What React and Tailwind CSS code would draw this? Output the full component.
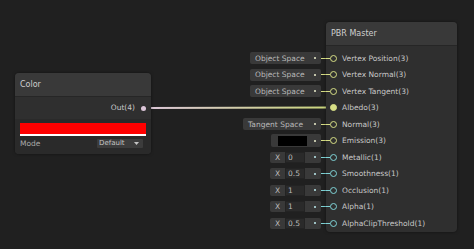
import React from 'react'

const V3 = '#d7de86'
const V1 = '#7fd3d6'
const V4 = '#dcc6d9'

const pbrRows = [
  { label: 'Vertex Position(3)', color: V3, field: { kind: 'space', text: 'Object Space', w: 'w-[71px]' } },
  { label: 'Vertex Normal(3)', color: V3, field: { kind: 'space', text: 'Object Space', w: 'w-[71px]' } },
  { label: 'Vertex Tangent(3)', color: V3, field: { kind: 'space', text: 'Object Space', w: 'w-[71px]' } },
  { label: 'Albedo(3)', color: V3, connected: true },
  { label: 'Normal(3)', color: V3, field: { kind: 'space', text: 'Tangent Space', w: 'w-[78px]' } },
  { label: 'Emission(3)', color: V3, field: { kind: 'color' } },
  { label: 'Metallic(1)', color: V1, field: { kind: 'x', value: '0' } },
  { label: 'Smoothness(1)', color: V1, field: { kind: 'x', value: '0.5' } },
  { label: 'Occlusion(1)', color: V1, field: { kind: 'x', value: '1' } },
  { label: 'Alpha(1)', color: V1, field: { kind: 'x', value: '1' } },
  { label: 'AlphaClipThreshold(1)', color: V1, field: { kind: 'x', value: '0.5' } },
]

const Dot = ({ color }) => (
  <div className="w-[2px] h-[2px] rounded-full shrink-0" style={{ backgroundColor: color }} />
)

const Dash = ({ color, w }) => (
  <div className={`${w} h-0 border-t border-dashed shrink-0`} style={{ borderColor: color }} />
)

const InlineField = ({ field, color }) => {
  const dotColor = color === V1 ? '#bfeef0' : '#eef0cf'

  if (field.kind === 'space') {
    return (
      <div className={`${field.w} h-[12px] bg-[#393939] rounded-[2px] flex items-center justify-between pl-[5px] pr-[5px] text-[#b9b9b9]`}>
        <span>{field.text}</span>
        <Dot color={dotColor} />
      </div>
    )
  }

  if (field.kind === 'color') {
    return (
      <div className="w-[50px] h-[13px] bg-[#393939] rounded-[2px] flex items-center justify-between pl-[7px] pr-[5px]">
        <div className="w-[29px] h-[10px] bg-black" />
        <Dot color={dotColor} />
      </div>
    )
  }

  // vector1 field: "X" label + value box
  return (
    <div className="w-[51px] h-[11px] bg-[#393939] rounded-[2px] flex items-center text-[#b9b9b9]">
      <span className="w-[15px] text-center">X</span>
      <div className="w-[20px] h-[11px] bg-[#2a2a2a] border border-[#232323] flex items-center pl-[2px] leading-none">
        {field.value}
      </div>
      <div className="flex-1 flex justify-end pr-[5px]">
        <Dot color={dotColor} />
      </div>
    </div>
  )
}

const Port = ({ color, connected }) => (
  <div
    className="w-[7px] h-[7px] rounded-full border-[1.5px] shrink-0"
    style={{ borderColor: color, backgroundColor: connected ? color : '#2f2f2f' }}
  />
)

const ColorNode = () => (
  <div className="absolute left-[15px] top-[73px] w-[136px] rounded-[4px] overflow-hidden bg-[#2f2f2f] shadow-[0_0_3px_rgba(0,0,0,0.5)]">
    <div className="h-[24px] bg-[#393939] border-b border-[#262626] flex items-center pl-[5px] text-[8px] text-[#cfcfcf]">
      Color
    </div>
    <div className="h-[22px] flex items-center justify-end pr-[5px] text-[#c8c8c8]">
      <span>Out(4)</span>
      <div className="ml-[6px] w-[5px] h-[5px] rounded-full" style={{ backgroundColor: V4 }} />
    </div>
    <div className="bg-[#2a2a2a] pt-[4px] pb-[3px]">
      <div className="mx-[5px] h-[11px] bg-[#ff0000]" />
      <div className="mx-[5px] h-[2px] bg-white" />
      <div className="h-[15px] flex items-center justify-between pl-[5px] pr-[8px]">
        <span className="text-[#a9a9a9]">Mode</span>
        <div className="w-[46px] h-[9px] bg-[#3c3c3c] rounded-[1px] flex items-center justify-between pl-[2px] pr-[4px] text-[7px] text-[#c4c4c4] leading-none">
          <span>Default</span>
          <svg width="5" height="3" viewBox="0 0 5 3">
            <path d="M0 0 L5 0 L2.5 3 Z" fill="#c4c4c4" />
          </svg>
        </div>
      </div>
    </div>
  </div>
)

const PbrMaster = () => (
  <div className="absolute left-[243px] top-[22px] flex">
    {/* inline fields that sit left of the node */}
    <div className="w-[83px] pt-[28px] flex flex-col">
      {pbrRows.map((r) => (
        <div key={r.label} className="h-[16.5px] flex items-center justify-end">
          {r.field && (
            <>
              <InlineField field={r.field} color={r.color} />
              <Dash color={r.color} w="w-[5px]" />
            </>
          )}
        </div>
      ))}
    </div>

    <div className="w-[131px] rounded-[4px] bg-[#2f2f2f] overflow-hidden shadow-[0_0_3px_rgba(0,0,0,0.5)]">
      <div className="h-[24px] bg-[#393939] border-b border-[#262626] flex items-center pl-[5px] text-[8px] text-[#cfcfcf]">
        PBR Master
      </div>
      <div className="pt-[4px]">
        {pbrRows.map((r) => (
          <div key={r.label} className="h-[16.5px] flex items-center text-[#c8c8c8]">
            {r.connected ? <div className="w-[3.5px]" /> : <Dash color={r.color} w="w-[3.5px]" />}
            <Port color={r.color} connected={r.connected} />
            <span className="ml-[5.5px] whitespace-nowrap">{r.label}</span>
          </div>
        ))}
      </div>
    </div>
  </div>
)

const Wire = () => (
  <svg className="absolute left-0 top-0 pointer-events-none" width="474" height="249">
    <defs>
      <linearGradient id="wire" gradientUnits="userSpaceOnUse" x1="146" y1="0" x2="330" y2="0">
        <stop offset="0" stopColor={V4} />
        <stop offset="1" stopColor="#c9d57a" />
      </linearGradient>
    </defs>
    <line x1="146" y1="108" x2="330" y2="107.5" stroke="url(#wire)" strokeWidth="2" />
  </svg>
)

export default function App() {
  return (
    <div className="relative w-[474px] h-[249px] bg-[#202020] overflow-hidden font-['DejaVu_Sans',sans-serif] text-[7.5px] leading-none">
      <Wire />
      <ColorNode />
      <PbrMaster />
    </div>
  )
}
